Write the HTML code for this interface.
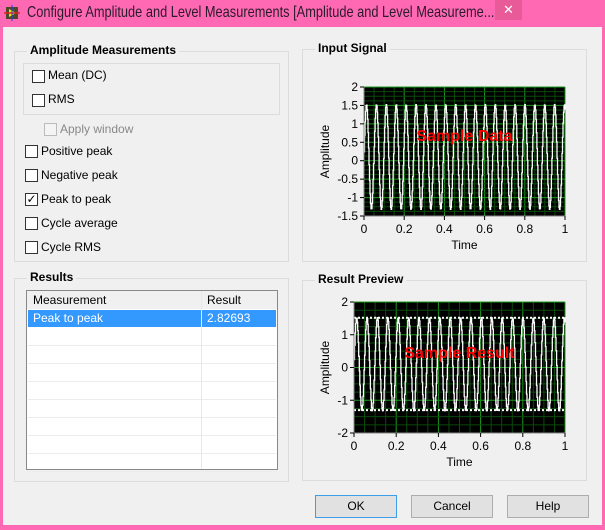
<!DOCTYPE html>
<html><head><meta charset="utf-8"><style>
*{margin:0;padding:0;box-sizing:border-box}
body{width:605px;height:530px;background:#ff69b4;font-family:"Liberation Sans",sans-serif;font-size:12px;color:#000;position:relative;overflow:hidden}
.abs{position:absolute}
#client{left:3px;top:27px;width:599px;height:498px;background:#f0f0f0}
.title{left:27px;top:4px;font-size:16px;color:#2a1a2a;white-space:nowrap;transform:scaleX(0.8);transform-origin:0 0}
.close{left:495px;top:0;width:27px;height:20px;background:#e85a98;color:#fff;text-align:center;font-size:13px;line-height:19px}
.grp{border:1px solid #dcdcdc}
.lbl{background:#f0f0f0;font-weight:bold;padding:0 3px;font-size:12px}
.cb{width:13px;height:13px;border:1px solid #333;background:#fff}
.t{font-size:12px;white-space:nowrap}
.btn{width:82px;height:23px;border:1px solid #adadad;background:#e1e1e1;text-align:center;line-height:21px;font-size:12px}
</style></head><body>
<svg class="abs" style="left:4px;top:5px" width="16" height="16"><rect x="2" y="2" width="12" height="12" fill="#4a4a2a"/><path d="M5 4 L12 8 L5 12Z" fill="#f0e020"/><line x1="0" y1="8" x2="16" y2="8" stroke="#e02020" stroke-width="1.5"/><line x1="8" y1="0" x2="8" y2="16" stroke="#2040e0" stroke-width="1"/></svg>
<div class="abs title">Configure Amplitude and Level Measurements [Amplitude and Level Measureme...</div>
<div class="abs close">✕</div>
<div id="client" class="abs"></div>

<div class="abs grp" style="left:14px;top:51px;width:275px;height:211px"></div>
<div class="abs lbl" style="left:27px;top:43px">Amplitude Measurements</div>
<div class="abs grp" style="left:23px;top:63px;width:257px;height:52px"></div>
<div class="abs cb" style="left:32px;top:70px"></div><div class="abs t" style="left:48px;top:68px">Mean (DC)</div>
<div class="abs cb" style="left:32px;top:94px"></div><div class="abs t" style="left:48px;top:92px">RMS</div>
<div class="abs cb" style="left:44px;top:123px;border-color:#bbb;background:#f4f4f4"></div><div class="abs t" style="left:60px;top:122px;color:#888">Apply window</div>
<div class="abs cb" style="left:25px;top:145px"></div><div class="abs t" style="left:41px;top:144px">Positive peak</div>
<div class="abs cb" style="left:25px;top:169px"></div><div class="abs t" style="left:41px;top:168px">Negative peak</div>
<div class="abs cb" style="left:25px;top:193px;font-size:12px;line-height:10px;text-align:center">✓</div><div class="abs t" style="left:41px;top:192px">Peak to peak</div>
<div class="abs cb" style="left:25px;top:217px"></div><div class="abs t" style="left:41px;top:216px">Cycle average</div>
<div class="abs cb" style="left:25px;top:241px"></div><div class="abs t" style="left:41px;top:240px">Cycle RMS</div>

<div class="abs grp" style="left:14px;top:278px;width:275px;height:204px"></div>
<div class="abs lbl" style="left:27px;top:270px">Results</div>
<div class="abs" style="left:26px;top:290px;width:252px;height:180px;border:1px solid #888;background:#fff">
<div class="abs" style="left:0;top:0;width:250px;height:18px;background:#f0f0f0"></div>
<div class="abs t" style="left:6px;top:2px">Measurement</div><div class="abs t" style="left:180px;top:2px">Result</div>
<div class="abs" style="left:1px;top:19px;width:248px;height:17px;background:#3399ff"></div>
<div class="abs t" style="left:6px;top:20px;color:#fff">Peak to peak</div><div class="abs t" style="left:180px;top:20px;color:#fff">2.82693</div>
<div class="abs" style="left:174px;top:0;width:1px;height:178px;background:#e8e8e8"></div>
<div id="rows"></div>
</div>

<div class="abs grp" style="left:302px;top:49px;width:285px;height:213px"></div>
<div class="abs lbl" style="left:315px;top:41px">Input Signal</div>
<div class="abs grp" style="left:302px;top:280px;width:285px;height:201px"></div>
<div class="abs lbl" style="left:315px;top:272px">Result Preview</div>

<svg id="g" class="abs" style="left:0;top:0" width="605" height="530"></svg>

<div class="abs btn" style="left:315px;top:495px;border-color:#3c9de8">OK</div>
<div class="abs btn" style="left:411px;top:495px">Cancel</div>
<div class="abs btn" style="left:507px;top:495px">Help</div>
<script>
var r='';for(var i=0;i<8;i++){r+='<div class="abs" style="left:1px;top:'+(54+i*18)+'px;width:248px;height:1px;background:#ececec"></div>';}
document.getElementById('rows').innerHTML=r;
function plot(L,R,T,B,ymax,ymin,ystep,yt,title,yl,dashed){
 var s='',W=R-L,H=B-T;
 s+='<rect x="'+L+'" y="'+T+'" width="'+W+'" height="'+H+'" fill="#000"/>';
 for(var i=0;i<=20;i++){var x=L+W*i/20;s+='<line x1="'+x+'" y1="'+T+'" x2="'+x+'" y2="'+B+'" stroke="'+(i%4==0?'#1a9a1a':'#0b4a0b')+'"/>';}
 var n=Math.round((ymax-ymin)/ystep*4);
 for(var i=0;i<=n;i++){var y=T+H*i/n;s+='<line x1="'+L+'" y1="'+y+'" x2="'+R+'" y2="'+y+'" stroke="'+(i%4==0?'#1a9a1a':'#0b4a0b')+'"/>';}
 function Y(v){return T+(ymax-v)/(ymax-ymin)*H;}
 var p='';for(var i=0;i<=400;i++){var t=i/400;var v=0.1+1.42*Math.sin(2*Math.PI*20.3*t+0.1);var x=L+W*t;p+=(i?' L':'M')+x.toFixed(1)+' '+Y(v).toFixed(1)+' H'+(x+W/400).toFixed(1);}
 s+='<path d="'+p+'" stroke="#fff" fill="none" stroke-width="1.3"/>';
 if(dashed){s+='<line x1="'+L+'" x2="'+R+'" y1="'+Y(1.52)+'" y2="'+Y(1.52)+'" stroke="#fff" stroke-width="2" stroke-dasharray="2,2"/><line x1="'+L+'" x2="'+R+'" y1="'+Y(-1.3)+'" y2="'+Y(-1.3)+'" stroke="#fff" stroke-width="2" stroke-dasharray="2,2"/>';}
 s+='<line x1="'+L+'" y1="'+T+'" x2="'+L+'" y2="'+B+'" stroke="#888"/><line x1="'+L+'" y1="'+B+'" x2="'+R+'" y2="'+B+'" stroke="#888"/>';
 for(var v=ymax;v>=ymin-1e-9;v-=ystep){var y=Y(v);s+='<line x1="'+(L-4)+'" x2="'+L+'" y1="'+y+'" y2="'+y+'" stroke="#000"/><text x="'+(L-6)+'" y="'+(y+4)+'" text-anchor="end" font-size="12" font-family="Liberation Sans">'+(Math.round(v*10)/10)+'</text>';}
 var xs=['0','0.2','0.4','0.6','0.8','1'];for(var i=0;i<6;i++){var x=L+W*i/5;s+='<line x1="'+x+'" x2="'+x+'" y1="'+B+'" y2="'+(B+4)+'" stroke="#000"/><text x="'+x+'" y="'+(B+17)+'" text-anchor="middle" font-size="12" font-family="Liberation Sans">'+xs[i]+'</text>';}
 s+='<text x="'+((L+R)/2)+'" y="'+(B+33)+'" text-anchor="middle" font-size="12" font-family="Liberation Sans">Time</text>';
 s+='<text transform="translate('+yl+','+((T+B)/2)+') rotate(-90)" text-anchor="middle" font-size="12" font-family="Liberation Sans">Amplitude</text>';
 s+='<text x="'+((L+R)/2)+'" y="'+yt+'" text-anchor="middle" font-size="16" font-weight="bold" fill="#f00" font-family="Liberation Sans">'+title+'</text>';
 return s;}
document.getElementById('g').innerHTML=plot(364,565,87,216,2,-1.5,0.5,141,'Sample Data',329,false)+plot(354,565,302,433,2,-2,1,358,'Sample Result',329,true);
</script>
</body></html>
